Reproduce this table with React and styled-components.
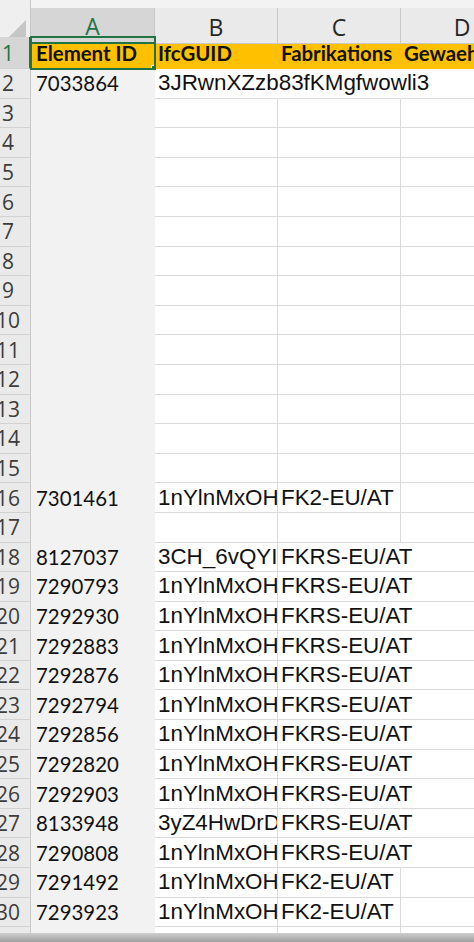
import React from 'react';
import styled, { createGlobalStyle } from 'styled-components';

const GlobalStyle = createGlobalStyle`
    html, body {
        margin: 0;
        padding: 0;
        background: #ffffff;
        overflow: hidden;
    }
`;

const COLUMNS = ['A', 'B', 'C', 'D'];
const WIDTHS = [124, 123, 123, 123];
const TEMPLATE = `31px ${WIDTHS.map(w => w + 'px').join(' ')}`;

const GREEN = '#217346';
const GRID = '#dadada';

const Sheet = styled.div`
    position: relative;
    width: 474px;
    height: 942px;
    overflow: hidden;
    background: #ffffff;
`;

const HeaderRow = styled.div`
    display: grid;
    grid-template-columns: ${TEMPLATE};
    height: 37px;
    background: #f3f3f3;
`;

const Corner = styled.div`
    display: flex;
    align-items: flex-end;
    justify-content: flex-end;
    padding: 0 4px 3px 0;
    background: #efefef;
    border-right: 1px solid #c8c8c8;
    border-bottom: 1px solid #c8c8c8;
`;

const Triangle = styled.div`
    width: 0;
    height: 0;
    border-left: 20px solid transparent;
    border-bottom: 20px solid #c6c6c6;
`;

const ColHeader = styled.div`
    display: flex;
    align-items: center;
    justify-content: center;
    margin-top: 8px;
    padding-top: 2px;
    background: ${p => (p.$active ? '#d6d6d6' : '#eaeaea')};
    border-right: 1px solid #c8c8c8;
    border-bottom: ${p => (p.$active ? `2px solid ${GREEN}` : '1px solid #c8c8c8')};
    color: ${p => (p.$active ? GREEN : '#262626')};
    font-family: 'Open Sans', 'Noto Sans', sans-serif;
    font-size: 23px;
`;

const Row = styled.div`
    display: grid;
    grid-template-columns: ${TEMPLATE};
    height: ${p => p.$height}px;
    background: ${p => (p.$head ? '#ffc000' : '#ffffff')};
`;

const RowHeader = styled.div`
    display: flex;
    align-items: center;
    background: ${p => (p.$active ? '#d6d6d6' : '#eaeaea')};
    border-right: ${p => (p.$active ? `2px solid ${GREEN}` : '1px solid #c8c8c8')};
    border-bottom: 1px solid #d2d2d2;
    color: ${p => (p.$active ? GREEN : '#3c3c3c')};
    font-family: 'Open Sans', 'Noto Sans', sans-serif;
    font-size: 21px;
`;

const RowNum = styled.span`
    display: flex;
    justify-content: center;
    width: 16px;
    white-space: nowrap;
`;

// cells are transparent so a long text can run over its empty neighbours
const Cell = styled.div`
    display: flex;
    align-items: center;
    padding-left: ${p => (p.$col === 0 ? 5 : 3)}px;
    white-space: nowrap;
    overflow: ${p => (p.$spill ? 'visible' : 'hidden')};
    background: ${p => (p.$col === 0 && !p.$head ? '#f2f2f2' : 'transparent')};
    border-right: 1px solid ${p => (p.$head || p.$col === 0 || p.$spill || p.$over ? 'transparent' : GRID)};
    border-bottom: 1px solid ${p => (p.$head || p.$col === 0 ? 'transparent' : GRID)};
    color: #111111;
    font-family: ${p => (p.$col === 0 || p.$head ? "'Lato', 'Open Sans', sans-serif" : "'Liberation Sans', Arial, sans-serif")};
    font-size: ${p => (p.$col === 0 || p.$head ? '20.4px' : '22.4px')};
    font-weight: ${p => (p.$head ? 700 : 400)};
`;

const SelectedCell = styled(Cell)`
    position: relative;
    z-index: 2;
    outline: 2px solid ${GREEN};
    outline-offset: -1px;

    &::after {
        content: '';
        position: absolute;
        right: -4px;
        bottom: -4px;
        width: 5px;
        height: 5px;
        background: ${GREEN};
        border: 1px solid #ffffff;
    }
`;

const BottomShade = styled.div`
    position: absolute;
    left: 0;
    right: 0;
    bottom: 0;
    height: 9px;
    background: linear-gradient(#cfcfcf, #9e9e9e);
`;

const header = ['Element ID', 'IfcGUID', 'Fabrikations', 'Gewaehrleistung'];

const FKRS = 'FKRS-EU/AT';
const FK2 = 'FK2-EU/AT';
const GUID = '1nYlnMxOH9$QwR7vT0kA2f';

// [A, B, C], plus which cells spill into the next column
const data = {
    2: { cells: ['7033864', '3JRwnXZzb83fKMgfwowli3', ''], spill: [1], over: [2] },
    16: { cells: ['7301461', GUID, FK2] },
    18: { cells: ['8127037', '3CH_6vQYI4h$Bp0Lq2x9Rm', FKRS], spill: [2] },
    19: { cells: ['7290793', GUID, FKRS], spill: [2] },
    20: { cells: ['7292930', GUID, FKRS], spill: [2] },
    21: { cells: ['7292883', GUID, FKRS], spill: [2] },
    22: { cells: ['7292876', GUID, FKRS], spill: [2] },
    23: { cells: ['7292794', GUID, FKRS], spill: [2] },
    24: { cells: ['7292856', GUID, FKRS], spill: [2] },
    25: { cells: ['7292820', GUID, FKRS], spill: [2] },
    26: { cells: ['7292903', GUID, FKRS], spill: [2] },
    27: { cells: ['8133948', '3yZ4HwDrDq8$Lm0VxT1nWc', FKRS], spill: [2] },
    28: { cells: ['7290808', GUID, FKRS], spill: [2] },
    29: { cells: ['7291492', GUID, FK2] },
    30: { cells: ['7293923', GUID, FK2] },
    31: { cells: ['8514850', '00xvRzzKOF3Hq7$Wn2LmTc', FK2] },
};

function SheetRow({ n }) {
    const row = data[n] || { cells: ['', '', ''] };
    const spill = row.spill || [];
    const over = row.over || [];
    return (
        <Row $height={29.6}>
            <RowHeader>
                <RowNum>{n}</RowNum>
            </RowHeader>
            {[0, 1, 2, 3].map(i => (
                <Cell
                    key={i}
                    $col={i}
                    $spill={spill.includes(i)}
                    $over={over.includes(i)}
                >
                    {row.cells[i] || ''}
                </Cell>
            ))}
        </Row>
    );
}

export default function App() {
    const rows = [];
    for (let n = 2; n <= 31; n++) rows.push(n);

    return (
        <>
            <GlobalStyle />
            <Sheet>
                <HeaderRow>
                    <Corner>
                        <Triangle />
                    </Corner>
                    {COLUMNS.map((c, i) => (
                        <ColHeader key={c} $active={i === 0}>{c}</ColHeader>
                    ))}
                </HeaderRow>

                <Row $height={32} $head>
                    <RowHeader $active>
                        <RowNum>1</RowNum>
                    </RowHeader>
                    {header.map((h, i) =>
                        i === 0
                            ? <SelectedCell key={h} $col={i} $head>{h}</SelectedCell>
                            : <Cell key={h} $col={i} $head>{h}</Cell>
                    )}
                </Row>

                {rows.map(n => <SheetRow key={n} n={n} />)}

                <BottomShade />
            </Sheet>
        </>
    );
}
